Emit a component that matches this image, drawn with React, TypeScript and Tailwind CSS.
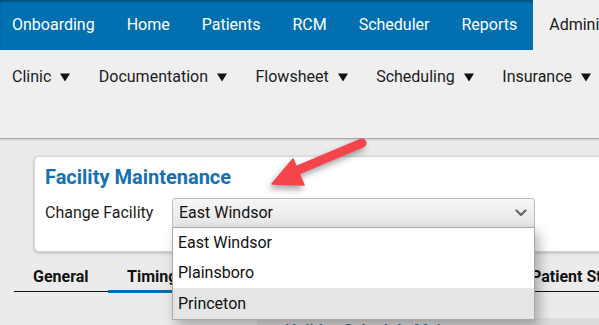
import React from "react";

const Tri = () => (
  <svg width="10" height="9" viewBox="0 0 10 9" className="shrink-0">
    <path d="M0 0.5 H10 L5 8.5 Z" fill="#111" />
  </svg>
);

const Chevron = () => (
  <svg width="12" height="8" viewBox="0 0 12 8">
    <path d="M1.5 1.5 L6 6 L10.5 1.5" fill="none" stroke="#6b6b6b" strokeWidth="2.4" strokeLinecap="round" strokeLinejoin="round" />
  </svg>
);

export default function App() {
  const nav = ["Onboarding", "Home", "Patients", "RCM", "Scheduler", "Reports"];
  const menu = ["Clinic", "Documentation", "Flowsheet", "Scheduling", "Insurance"];
  return (
    <div
      className="w-[599px] h-[325px] overflow-hidden relative bg-[#ebebeb]"
      style={{ fontFamily: "Roboto, 'Liberation Sans', sans-serif" }}
    >
      <div className="w-[820px]">
        <nav className="h-[50px] flex items-stretch bg-[#0270b0] shadow-[inset_0_2px_2px_rgba(0,0,0,0.25)]">
          <div className="flex items-stretch ml-[-4px]">
            {nav.map((n) => (
              <div key={n} className="px-4 flex items-center text-white text-[16px]">
                {n}
              </div>
            ))}
            <div className="px-4 flex items-center bg-[#efefef] text-[#1a1a1a] text-[16px]">
              Administration
            </div>
          </div>
        </nav>
        <div className="h-[89px] bg-[#efefef] border-b border-[#a9a9a9] shadow-[0_1px_2px_rgba(0,0,0,0.15)]">
          <div className="h-[54px] flex items-center pl-[12px] gap-[28.5px]">
            {menu.map((m) => (
              <div key={m} className="flex items-center gap-[9px] text-[16px] text-[#1c1c1c]">
                <span>{m}</span>
                <Tri />
              </div>
            ))}
          </div>
        </div>

        <div className="pl-[34px] pt-[17px]">
          <div className="h-[96px] rounded-[5px] border border-[#d6d6d6] bg-white shadow-[0_1px_3px_rgba(0,0,0,0.25)] pl-[10px] pt-[8px]">
            <div className="text-[20px] font-bold text-[#1670b2] leading-[24px]">Facility Maintenance</div>
            <div className="flex items-center mt-[9px]">
              <div className="w-[127px] text-[16px] text-[#1c1c1c]">Change Facility</div>
              <div className="relative w-[363px] h-[30px]">
                <div className="h-full rounded-[3px] border border-[#bdbdbd] bg-gradient-to-b from-[#f6f6f6] to-[#e6e6e6] flex items-center justify-between pl-[6px] pr-[7px] text-[16px] text-[#111]">
                  <span>East Windsor</span>
                  <Chevron />
                </div>
                <div className="absolute left-0 top-[29px] w-[363px] h-[93px] z-20 bg-white border border-[#a8a8a8] shadow-[4px_6px_12px_rgba(0,0,0,0.3)] text-[16px] text-[#111]">
                  <div className="h-[30px] flex items-center pl-[5px]">East Windsor</div>
                  <div className="h-[30px] flex items-center pl-[5px]">Plainsboro</div>
                  <div className="h-[31px] flex items-center pl-[5px] bg-[#e5e5e5]">Princeton</div>
                </div>
              </div>
            </div>
          </div>
        </div>

        <div className="ml-[14px] mt-[10px] flex items-end border-b-[1.5px] border-[#111] text-[16px] font-bold text-[#111]">
          <div className="w-[94px] h-[29px] flex items-center pl-[19px]">General</div>
          <div className="w-[110px] h-[29px] flex items-center pl-[19px] border-b-[3px] border-[#0270b0] mb-[-1.5px]">Timing</div>
          <div className="w-[140px] h-[29px] flex items-center pl-[19px]">Rooms</div>
          <div className="w-[154px] h-[29px] flex items-center pl-[19px]">Visit Types</div>
          <div className="w-[170px] h-[29px] flex items-center pl-[19px]">Patient Status</div>
        </div>

        <div className="flex mt-[26px]">
          <div className="w-[257px]" />
          <div className="flex-1 bg-[#dcdcdc] pl-[28px] pt-[1px] text-[16px] font-bold text-[#1670b2]">
            Holiday Schedule Maintenance
          </div>
        </div>
      </div>

      <svg
        className="absolute left-[262px] top-[134px] z-30 drop-shadow-[-2px_4px_3px_rgba(0,0,0,0.35)]"
        width="110"
        height="60"
        viewBox="262 134 110 60"
      >
        <line x1="298" y1="170" x2="362" y2="143" stroke="#f4444c" strokeWidth="9" strokeLinecap="round" />
        <path d="M272 184 L293 159 L304 185 Z" fill="#f4444c" stroke="#f4444c" strokeWidth="1.5" strokeLinejoin="round" />
      </svg>
    </div>
  );
}
